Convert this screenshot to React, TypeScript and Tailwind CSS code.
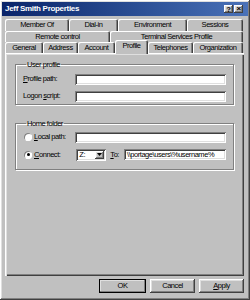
import React from "react";

const raised =
  "shadow-[inset_-1px_-1px_#404040,inset_1px_1px_#ffffff,inset_-2px_-2px_#808080,inset_2px_2px_#dfdfdf]";
const sunken =
  "shadow-[inset_1px_1px_#808080,inset_-1px_-1px_#ffffff,inset_2px_2px_#404040,inset_-2px_-2px_#dfdfdf]";

type TabProps = { label: string; className: string };

function Tab({ label, className }: TabProps) {
  return (
    <div
      className={`flex items-center justify-center rounded-t-[2px] bg-[#c0c0c0] shadow-[inset_1px_1px_#ffffff,inset_-1px_0_#404040,inset_-2px_0_#808080] ${className}`}
    >
      {label}
    </div>
  );
}

function Field({ className = "w-[151px]", children }: { className?: string; children?: React.ReactNode }) {
  return (
    <div className={`h-[11px] bg-white ${sunken} flex items-center pl-[3px] ${className}`}>
      {children}
    </div>
  );
}

function Radio({ checked }: { checked?: boolean }) {
  return (
    <div className="w-[8px] h-[8px] rounded-full bg-white shadow-[inset_1px_1px_#808080,inset_-1px_-1px_#ffffff] flex items-center justify-center">
      {checked && <div className="w-[3px] h-[3px] rounded-full bg-black" />}
    </div>
  );
}

function Btn({ className, children }: { className: string; children: React.ReactNode }) {
  return (
    <div className={`h-[14px] flex items-center justify-center ${raised} ${className}`}>
      {children}
    </div>
  );
}

export default function App() {
  return (
    <div
      className={`w-[250px] h-[300px] bg-[#c0c0c0] p-[2px] text-black text-[7.5px] leading-none tracking-[-0.45px] ${raised}`}
      style={{ fontFamily: '"Liberation Sans", Arial, sans-serif' }}
    >
      {/* Title bar */}
      <div className="h-[14px] bg-gradient-to-r from-[#0a246a] to-[#4a72b8] flex items-center justify-between pl-[3px] pr-[5px]">
        <span className="text-white font-bold text-[8px] tracking-[-0.3px]">Jeff Smith Properties</span>
        <div className="flex gap-[1px]">
          <div className={`w-[9px] h-[8px] bg-[#c0c0c0] ${raised} flex items-center justify-center font-bold text-[7px]`}>?</div>
          <div className={`w-[9px] h-[8px] bg-[#c0c0c0] ${raised} flex items-center justify-center font-bold text-[8px]`}>×</div>
        </div>
      </div>

      <div className="pt-[3px] pl-[3px] pr-[4px]">
        {/* Tab rows */}
        <div className="flex h-[12px]">
          <Tab label="Member Of" className="w-[64px]" />
          <Tab label="Dial-in" className="w-[49px]" />
          <Tab label="Environment" className="w-[69px]" />
          <Tab label="Sessions" className="w-[56px]" />
        </div>
        <div className="flex h-[11px]">
          <Tab label="Remote control" className="w-[105px]" />
          <Tab label="Terminal Services Profile" className="w-[133px]" />
        </div>
        <div className="flex h-[11px] items-end">
          <Tab label="General" className="w-[38px] h-[11px]" />
          <Tab label="Address" className="w-[35px] h-[11px]" />
          <Tab label="Account" className="w-[37px] h-[11px]" />
          <Tab label="Profile" className="w-[33px] h-[14px] -mb-[1px] relative z-10 pb-[2px]" />
          <Tab label="Telephones" className="w-[45px] h-[11px]" />
          <Tab label="Organization" className="w-[50px] h-[11px]" />
        </div>

        {/* Panel */}
        <div className="h-[223px] w-[239px] shadow-[inset_1px_1px_#ffffff,inset_2px_2px_#dfdfdf,inset_-1px_-1px_#404040,inset_-2px_-2px_#808080] pt-[8px] px-[10px]">
          <fieldset className="border border-[#808080] shadow-[1px_1px_#ffffff,inset_1px_1px_#ffffff] h-[44px] pl-[7px] pr-[7px]">
            <legend className="px-[1px] ml-[3px]">User profile</legend>
            <div className="flex items-center justify-between mt-[5px]">
              <span><u>P</u>rofile path:</span>
              <Field />
            </div>
            <div className="flex items-center justify-between mt-[6px]">
              <span>Logon <u>s</u>cript:</span>
              <Field />
            </div>
          </fieldset>

          <fieldset className="border border-[#808080] shadow-[1px_1px_#ffffff,inset_1px_1px_#ffffff] h-[50px] mt-[15px] pl-[8px] pr-[7px]">
            <legend className="px-[1px] ml-[2px]">Home folder</legend>
            <div className="flex items-center mt-[4px]">
              <Radio />
              <span className="ml-[2px]"><u>L</u>ocal path:</span>
              <Field className="w-[151px] ml-auto" />
            </div>
            <div className="flex items-center mt-[6px]">
              <Radio checked />
              <span className="ml-[2px]"><u>C</u>onnect:</span>
              <div className={`ml-auto w-[30px] h-[12px] bg-white ${sunken} flex items-center justify-between pl-[3px] pr-[2px]`}>
                <span>Z:</span>
                <div className={`w-[9px] h-[8px] bg-[#c0c0c0] ${raised} flex items-center justify-center`}>
                  <svg width="5" height="3" viewBox="0 0 5 3">
                    <path d="M0 0h5L2.5 3z" fill="#000" />
                  </svg>
                </div>
              </div>
              <span className="ml-[4px] mr-[5px]"><u>T</u>o:</span>
              <Field className="w-[102px]">\\portage\users\%username%</Field>
            </div>
          </fieldset>
        </div>

        {/* Buttons */}
        <div className="flex justify-end gap-[4px] mt-[3px]">
          <Btn className="w-[47px] outline outline-1 outline-black -outline-offset-1">OK</Btn>
          <Btn className="w-[45px]">Cancel</Btn>
          <Btn className="w-[45px]"><span><u>A</u>pply</span></Btn>
        </div>
      </div>
    </div>
  );
}
